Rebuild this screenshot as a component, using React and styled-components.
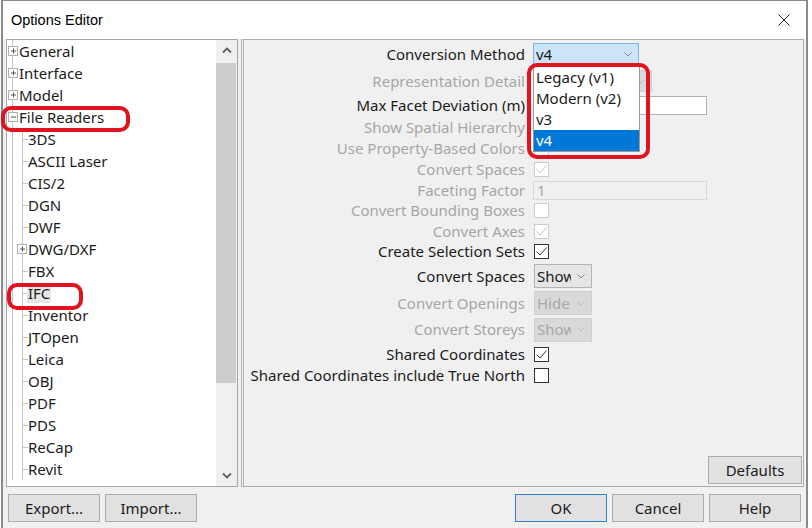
import React from 'react';
import styled, { createGlobalStyle } from 'styled-components';

const GlobalStyle = createGlobalStyle`
  html, body { margin: 0; padding: 0; background: #ffffff; }
  body { font-family: "Noto Sans", "Open Sans", sans-serif; }
  * { box-sizing: border-box; }
`;

const Page = styled.div`
  position: relative;
  width: 812px;
  height: 528px;
  overflow: hidden;
`;

const Frame = styled.div`
  margin-left: 1px;
  width: 807px;
  height: 528px;
  border-left: 2px solid #8a8a8a;
  border-right: 2px solid #8a8a8a;
  border-top: 1px solid #8a8a8a;
  background: #f0f0f0;
  display: flex;
  flex-direction: column;
  font-size: 15px;
  color: #1b1b1b;
`;

const TitleBar = styled.div`
  height: 38px;
  flex: none;
  background: #ffffff;
  display: flex;
  align-items: center;
  justify-content: space-between;
  padding: 0 16px 0 8px;
  font-family: "Liberation Sans", Arial, sans-serif;
  font-size: 14.5px;
  color: #000;
`;

const CloseIcon = () => (
  <svg width="12" height="12" viewBox="0 0 12 12">
    <path d="M0.5 0.5 L11.5 11.5 M11.5 0.5 L0.5 11.5" stroke="#222" strokeWidth="1" fill="none" />
  </svg>
);

const Body = styled.div`
  flex: 1;
  display: flex;
  flex-direction: column;
  padding: 0 2px 0 3px;
`;

const Main = styled.div`
  height: 448px;
  display: flex;
  gap: 3px;
`;

const Tree = styled.div`
  width: 232px;
  flex: none;
  border: 1px solid #a8a8a8;
  background: #ffffff;
  display: flex;
`;

const TreeList = styled.div`
  flex: 1;
  display: flex;
  flex-direction: column;
  overflow: hidden;
`;

const TreeRowBox = styled.div`
  height: 22px;
  flex: none;
  display: flex;
  align-items: center;
  white-space: nowrap;
`;

const TreeLabel = styled.span`
  line-height: 18px;
  padding-bottom: 1px;
  margin-left: ${p => (p.$selected ? -1 : 0)}px;
  padding-left: ${p => (p.$selected ? 1 : 0)}px;
  padding-right: 1px;
  background: ${p => (p.$selected ? '#e6e6e6' : 'transparent')};
  color: #1b1b1b;
`;

const Scrollbar = styled.div`
  width: 21px;
  flex: none;
  background: #f0f0f0;
  display: flex;
  flex-direction: column;
`;

const ScrollButton = styled.div`
  height: 21px;
  flex: none;
  display: flex;
  align-items: center;
  justify-content: center;
`;

const ScrollTrack = styled.div`
  flex: 1;
  padding: 2px 1px 0 0;
`;

const ScrollThumb = styled.div`
  height: 320px;
  background: #cdcdcd;
`;

const Chevron = ({ up }) => (
  <svg width="10" height="7" viewBox="0 0 10 7">
    <path
      d={up ? 'M1 5.5 L5 1.5 L9 5.5' : 'M1 1.5 L5 5.5 L9 1.5'}
      stroke="#606060"
      strokeWidth="1.8"
      fill="none"
    />
  </svg>
);

const Expander = ({ x, open }) => (
  <g>
    <rect x={x + 0.5} y="6.5" width="9" height="9" fill="#fff" stroke="#b0b0b0" />
    <path d={`M${x + 3} 11 H${x + 8}`} stroke="#555" strokeWidth="1" />
    {!open && <path d={`M${x + 5.5} 8.5 V13.5`} stroke="#555" strokeWidth="1" />}
  </g>
);

const Gutter = ({ child, expander, open }) => (
  <svg width={child ? 21 : 12} height="22" viewBox={`0 0 ${child ? 21 : 12} 22`} style={{ flex: 'none' }}>
    <path d="M5.5 0 V22" stroke="#c4c4c4" strokeWidth="1" />
    {child && <path d="M15.5 0 V22 M15.5 11.5 H21" stroke="#c4c4c4" strokeWidth="1" />}
    {!child && <Expander x={1} open={open} />}
    {child && expander && <Expander x={10} open={open} />}
  </svg>
);

const treeItems = [
  { label: 'General', exp: true },
  { label: 'Interface', exp: true },
  { label: 'Model', exp: true },
  { label: 'File Readers', exp: true, open: true },
  { label: '3DS', child: true },
  { label: 'ASCII Laser', child: true },
  { label: 'CIS/2', child: true },
  { label: 'DGN', child: true },
  { label: 'DWF', child: true },
  { label: 'DWG/DXF', child: true, exp: true },
  { label: 'FBX', child: true },
  { label: 'IFC', child: true, selected: true },
  { label: 'Inventor', child: true },
  { label: 'JTOpen', child: true },
  { label: 'Leica', child: true },
  { label: 'OBJ', child: true },
  { label: 'PDF', child: true },
  { label: 'PDS', child: true },
  { label: 'ReCap', child: true },
  { label: 'Revit', child: true },
];

const Panel = styled.div`
  flex: 1;
  border: 1px solid #adadad;
  border-left: 3px double #b4b4b4;
  display: flex;
  flex-direction: column;
`;

const Form = styled.div`
  display: flex;
  flex-direction: column;
`;

const FormRow = styled.div`
  height: ${p => p.$h}px;
  display: grid;
  grid-template-columns: 281px 1fr;
  column-gap: 8px;
  align-items: center;
`;

const Label = styled.div`
  text-align: right;
  white-space: nowrap;
  line-height: 18px;
  padding-bottom: 1px;
  color: ${p => (p.$disabled ? '#a6a6a6' : '#1b1b1b')};
`;

const ControlCell = styled.div`
  position: relative;
  display: flex;
  align-items: center;
`;

const Select = styled.div`
  width: ${p => p.$w}px;
  height: ${p => p.$h}px;
  margin-left: ${p => p.$ml || 0}px;
  display: flex;
  align-items: center;
  justify-content: space-between;
  padding: 0 6px 0 2px;
  background: ${p => (p.$active ? '#cce4f7' : p.$disabled ? '#d9d9d9' : '#e5e5e5')};
  border: 1px solid ${p => (p.$active ? '#7fb3e6' : p.$disabled ? '#d0d0d0' : '#b4b4b4')};
  color: ${p => (p.$disabled ? '#a8a8a8' : '#1b1b1b')};
`;

const SelectValue = styled.span`
  display: block;
  width: ${p => (p.$clip ? `${p.$clip}px` : 'auto')};
  overflow: hidden;
  white-space: nowrap;
  line-height: 18px;
  padding-bottom: 1px;
`;

const SmallChevron = ({ color = '#8a8a8a' }) => (
  <svg width="8" height="5" viewBox="0 0 8 5">
    <path d="M0.5 0.5 L4 4 L7.5 0.5" stroke={color} strokeWidth="1" fill="none" />
  </svg>
);

const TextBox = styled.div`
  width: 174px;
  height: ${p => p.$h}px;
  display: flex;
  align-items: center;
  padding-left: 3px;
  background: ${p => (p.$disabled ? '#f0f0f0' : '#ffffff')};
  border: 1px solid ${p => (p.$disabled ? '#d9d9d9' : '#b0b0b0')};
  color: #a6a6a6;
  line-height: 18px;
`;

const CheckBox = styled.div`
  width: 15px;
  height: 15px;
  margin-left: 1px;
  background: #ffffff;
  border: 1px solid ${p => (p.$disabled ? '#cccccc' : '#333333')};
  display: flex;
  align-items: center;
  justify-content: center;
`;

const Check = ({ disabled, checked }) => (
  <CheckBox $disabled={disabled}>
    {checked && (
      <svg width="13" height="13" viewBox="0 0 13 13">
        <path d="M1.5 6.5 L5 10 L11.5 2.5" stroke={disabled ? '#c4c4c4' : '#333'} strokeWidth="1" fill="none" />
      </svg>
    )}
  </CheckBox>
);

const DropList = styled.div`
  position: absolute;
  left: 0;
  top: calc(100% + 1px);
  width: 107px;
  background: #ffffff;
  border: 1px solid #9a9a9a;
  z-index: 2;
`;

const DropItem = styled.div`
  height: 21px;
  display: flex;
  align-items: center;
  padding: 0 0 2px 2px;
  background: ${p => (p.$selected ? '#0078d7' : '#ffffff')};
  color: ${p => (p.$selected ? '#ffffff' : '#1b1b1b')};
`;

const PanelFooter = styled.div`
  margin-top: auto;
  display: flex;
  justify-content: flex-end;
  padding: 0 1px 2px 0;
`;

const Button = styled.button`
  width: ${p => p.$w || 92}px;
  height: 28px;
  padding: 0 0 1px 0;
  font-family: "Noto Sans", "Open Sans", sans-serif;
  font-size: 15px;
  color: #1b1b1b;
  background: #e1e1e1;
  border: 1px solid ${p => (p.$primary ? '#2f80d2' : '#adadad')};
`;

const BottomBar = styled.div`
  display: flex;
  justify-content: space-between;
  padding: 7px 3px 0 2px;
`;

const ButtonGroup = styled.div`
  display: flex;
  gap: 5px;
`;

const Annotation = styled.div`
  position: absolute;
  left: ${p => p.$x}px;
  top: ${p => p.$y}px;
  width: ${p => p.$w}px;
  height: ${p => p.$h}px;
  border: 4px solid #e0141e;
  border-radius: 10px;
  pointer-events: none;
  z-index: 5;
`;

const SmallSelect = ({ value, disabled }) => (
  <Select $w={58} $h={24} $ml={1} $disabled={disabled}>
    <SelectValue $clip={34}>{value}</SelectValue>
    <SmallChevron color={disabled ? '#bdbdbd' : '#8a8a8a'} />
  </Select>
);

export default function App() {
  return (
    <Page>
      <GlobalStyle />
      <Frame>
        <TitleBar>
          <span>Options Editor</span>
          <CloseIcon />
        </TitleBar>
        <Body>
          <Main>
            <Tree>
              <TreeList>
                {treeItems.map(it => (
                  <TreeRowBox key={it.label}>
                    <Gutter child={it.child} expander={it.exp} open={it.open} />
                    <TreeLabel $selected={it.selected}>{it.label}</TreeLabel>
                  </TreeRowBox>
                ))}
              </TreeList>
              <Scrollbar>
                <ScrollButton><Chevron up /></ScrollButton>
                <ScrollTrack><ScrollThumb /></ScrollTrack>
                <ScrollButton><Chevron /></ScrollButton>
              </Scrollbar>
            </Tree>
            <Panel>
              <Form>
                <FormRow $h={28}>
                  <Label>Conversion Method</Label>
                  <ControlCell>
                    <Select $w={106} $h={22} $active>
                      <SelectValue>v4</SelectValue>
                      <SmallChevron color="#7a8a99" />
                    </Select>
                    <DropList>
                      <DropItem>Legacy (v1)</DropItem>
                      <DropItem>Modern (v2)</DropItem>
                      <DropItem>v3</DropItem>
                      <DropItem $selected>v4</DropItem>
                    </DropList>
                  </ControlCell>
                </FormRow>
                <FormRow $h={26}>
                  <Label $disabled>Representation Detail</Label>
                  <ControlCell>
                    <Select $w={119} $h={22} $disabled>
                      <SelectValue>Medium</SelectValue>
                      <SmallChevron color="#bdbdbd" />
                    </Select>
                  </ControlCell>
                </FormRow>
                <FormRow $h={23}>
                  <Label>Max Facet Deviation (m)</Label>
                  <ControlCell><TextBox $h={19} /></ControlCell>
                </FormRow>
                <FormRow $h={21}>
                  <Label $disabled>Show Spatial Hierarchy</Label>
                  <ControlCell><Check disabled /></ControlCell>
                </FormRow>
                <FormRow $h={20}>
                  <Label $disabled>Use Property-Based Colors</Label>
                  <ControlCell><Check disabled /></ControlCell>
                </FormRow>
                <FormRow $h={22}>
                  <Label $disabled>Convert Spaces</Label>
                  <ControlCell><Check disabled checked /></ControlCell>
                </FormRow>
                <FormRow $h={20}>
                  <Label $disabled>Faceting Factor</Label>
                  <ControlCell><TextBox $h={19} $disabled>1</TextBox></ControlCell>
                </FormRow>
                <FormRow $h={21}>
                  <Label $disabled>Convert Bounding Boxes</Label>
                  <ControlCell><Check disabled /></ControlCell>
                </FormRow>
                <FormRow $h={20}>
                  <Label $disabled>Convert Axes</Label>
                  <ControlCell><Check disabled checked /></ControlCell>
                </FormRow>
                <FormRow $h={21}>
                  <Label>Create Selection Sets</Label>
                  <ControlCell><Check checked /></ControlCell>
                </FormRow>
                <FormRow $h={28}>
                  <Label>Convert Spaces</Label>
                  <ControlCell><SmallSelect value="Show" /></ControlCell>
                </FormRow>
                <FormRow $h={26}>
                  <Label $disabled>Convert Openings</Label>
                  <ControlCell><SmallSelect value="Hide" disabled /></ControlCell>
                </FormRow>
                <FormRow $h={27}>
                  <Label $disabled>Convert Storeys</Label>
                  <ControlCell><SmallSelect value="Show" disabled /></ControlCell>
                </FormRow>
                <FormRow $h={22}>
                  <Label>Shared Coordinates</Label>
                  <ControlCell><Check checked /></ControlCell>
                </FormRow>
                <FormRow $h={20}>
                  <Label>Shared Coordinates include True North</Label>
                  <ControlCell><Check /></ControlCell>
                </FormRow>
              </Form>
              <PanelFooter>
                <Button $w={94}>Defaults</Button>
              </PanelFooter>
            </Panel>
          </Main>
          <BottomBar>
            <ButtonGroup>
              <Button>Export...</Button>
              <Button>Import...</Button>
            </ButtonGroup>
            <ButtonGroup>
              <Button $primary>OK</Button>
              <Button>Cancel</Button>
              <Button>Help</Button>
            </ButtonGroup>
          </BottomBar>
        </Body>
      </Frame>
      <Annotation $x={1} $y={106} $w={129} $h={26} />
      <Annotation $x={7} $y={283} $w={76} $h={27} />
      <Annotation $x={527} $y={63} $w={123} $h={96} />
    </Page>
  );
}
